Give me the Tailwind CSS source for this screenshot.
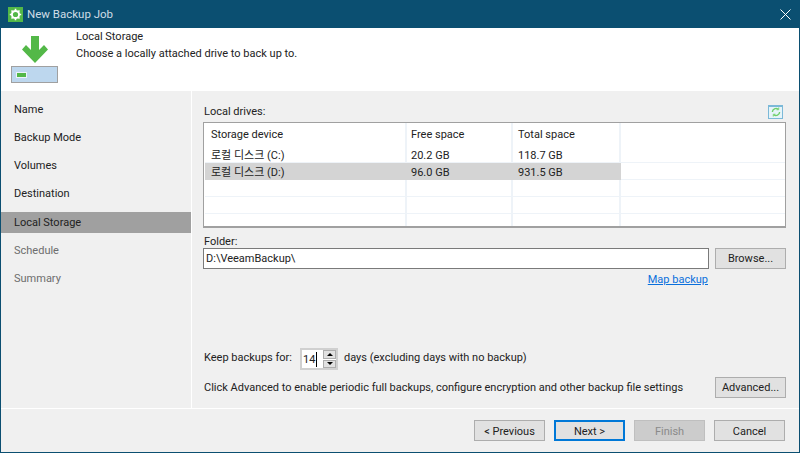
<!DOCTYPE html>
<html lang="en">
<head>
  <meta charset="UTF-8">
  <title>New Backup Job</title>
  <script src="https://cdn.jsdelivr.net/npm/@tailwindcss/browser@4"></script>
</head>
<body class="m-0 overflow-hidden bg-[#f0f0f0]">
  <div class="w-[800px] h-[453px] flex flex-col border-x border-b border-[#0b4f71] text-[11px] leading-[15px] text-[#222] font-['Roboto','Noto_Sans_CJK_KR',sans-serif]">
    <!-- title bar -->
    <div class="h-[28px] -mx-px shrink-0 bg-[#0b4f71] flex items-center pl-2 pr-[9px]">
      <div class="w-[15px] h-[15px] bg-[#53b848] flex items-center justify-center">
        <svg width="13" height="13" viewBox="0 0 13 13"><circle cx="6.5" cy="6.5" r="3.6" fill="none" stroke="#fff" stroke-width="2"/><path d="M6.5 .8v2M6.5 10.2v2M.8 6.5h2M10.2 6.5h2M2.5 2.5l1.4 1.4M9.1 9.1l1.4 1.4M2.5 10.5l1.4-1.4M9.1 3.9l1.4-1.4" stroke="#fff" stroke-width="1.6"/></svg>
      </div>
      <span class="ml-[4px] text-[#cfdde6] text-[11.5px]">New Backup Job</span>
      <svg class="ml-auto" width="11" height="11" viewBox="0 0 11 11"><path d="M.5.5l10 10M10.5.5l-10 10" stroke="#fff" stroke-width="1"/></svg>
    </div>
    <!-- header -->
    <div class="h-[63px] shrink-0 bg-white flex">
      <div class="w-[75px] shrink-0 pl-[10px] pt-[8px] flex flex-col">
        <svg class="ml-[11px]" width="26" height="27" viewBox="0 0 26 27"><path d="M9 0h8v14l5-5 4 4.500L13 27 0 13.500 4 9l5 5z" fill="#53b848"/></svg>
        <div class="mt-[3px] w-[47px] h-[17px] bg-[#bdd7ee] border border-[#a0a0a0] flex items-center pl-[5px]">
          <div class="w-[9px] h-[4px] bg-[#53b848] outline outline-white/70"></div>
        </div>
      </div>
      <div class="pt-[1px]">
        <div class="leading-[15px]">Local Storage</div>
        <div class="mt-[2px]">Choose a locally attached drive to back up to.</div>
      </div>
    </div>
    <!-- main -->
    <div class="h-[318px] shrink-0 flex border-b border-white">
      <div class="w-[190px] shrink-0 pt-[4px]">
        <div class="h-[28.25px] pl-[13px] flex items-center">Name</div>
        <div class="h-[28.25px] pl-[13px] flex items-center">Backup Mode</div>
        <div class="h-[28.25px] pl-[13px] flex items-center">Volumes</div>
        <div class="h-[28.25px] pl-[13px] flex items-center">Destination</div>
        <div class="h-[21px] my-[3.625px] pl-[13px] flex items-center bg-[#a0a0a0]">Local Storage</div>
        <div class="h-[28.25px] pl-[13px] flex items-center text-[#6d6d6d]">Schedule</div>
        <div class="h-[28.25px] pl-[13px] flex items-center text-[#6d6d6d]">Summary</div>
      </div>
      <div class="flex-1 border-l border-white pl-[12px] pr-[13px] pt-[13px] flex flex-col">
        <div class="flex justify-between items-center h-[15px]">
          <span>Local drives:</span>
          <div class="w-[15px] h-[14px] border border-[#7cb9d8] border-t-2 bg-[#e6f4f9] flex items-center justify-center translate-x-[-3px]">
            <svg width="10" height="10" viewBox="0 0 11 11" fill="none" stroke="#6fcf6a" stroke-width="1.500"><path d="M1.500 5.500A4 4 0 0 1 8 2.500M9.500 5.500A4 4 0 0 1 3 8.500"/><path d="M8.500 .5v2.500H6M2.500 10.500V8H5" stroke-width="1"/></svg>
          </div>
        </div>
        <!-- table -->
        <div class="mt-[3px] h-[106px] -ml-px w-[583px] bg-white border border-[#a0a0a0] border-b-2 grid grid-cols-[202px_106px_108px_1fr] grid-rows-[23px_17px_17px_17px_17px_1fr] pl-[1px]">
          <div class="pl-[6px] pt-[4px] border-r-2 border-[#eef3f8]">Storage device</div>
          <div class="pl-[4px] pt-[4px] border-r-2 border-[#eef3f8]">Free space</div>
          <div class="pl-[5px] pt-[4px] border-r-2 border-[#eef3f8]">Total space</div>
          <div></div>

          <div class="pl-[6px] pt-[2px] border-r-2 border-b border-[#eef3f8] flex items-center">로컬 디스크 (C:)</div>
          <div class="pl-[4px] pt-[2px] border-r-2 border-b border-[#eef3f8] flex items-center">20.2 GB</div>
          <div class="pl-[5px] pt-[2px] border-r-2 border-b border-[#eef3f8] flex items-center">118.7 GB</div>
          <div class="border-b border-[#eef3f8]"></div>

          <div class="pl-[6px] pt-[2px] bg-[#d4d4d4] flex items-center">로컬 디스크 (D:)</div>
          <div class="pl-[4px] pt-[2px] bg-[#d4d4d4] flex items-center">96.0 GB</div>
          <div class="pl-[5px] pt-[2px] bg-[#d4d4d4] flex items-center">931.5 GB</div>
          <div class="border-b border-[#eef3f8]"></div>

          <div class="border-r-2 border-b border-[#eef3f8]"></div>
          <div class="border-r-2 border-b border-[#eef3f8]"></div>
          <div class="border-r-2 border-b border-[#eef3f8]"></div>
          <div class="border-b border-[#eef3f8]"></div>

          <div class="border-r-2 border-b border-[#eef3f8]"></div>
          <div class="border-r-2 border-b border-[#eef3f8]"></div>
          <div class="border-r-2 border-b border-[#eef3f8]"></div>
          <div class="border-b border-[#eef3f8]"></div>

          <div class="border-r-2 border-[#eef3f8]"></div>
          <div class="border-r-2 border-[#eef3f8]"></div>
          <div class="border-r-2 border-[#eef3f8]"></div>
          <div></div>
        </div>
        <div class="mt-[6px] h-[14px]">Folder:</div>
        <div class="flex -ml-px">
          <div class="w-[506px] h-[21px] bg-white border border-[#7a7a7a] pl-[2px] flex items-center">D:\VeeamBackup\</div>
          <div class="ml-[6px] w-[71px] h-[21px] bg-[#e1e1e1] border border-[#adadad] flex items-center justify-center">Browse...</div>
        </div>
        <div class="mt-[3px] w-[505px] -ml-px text-right text-[#0a6fdc] underline">Map backup</div>
        <div class="mt-[61px] flex items-center h-[22px]">
          <span class="w-[96px] pb-[3px]">Keep backups for:</span>
          <div class="w-[38px] h-[22px] bg-white border-2 border-[#d0d0d0] flex items-center pl-[1px]">
            <span class="border-r border-black leading-[15px] pr-[0.5px]">14</span>
            <div class="ml-auto w-[13px] h-[18px] flex flex-col gap-px">
              <div class="flex-1 bg-[#e1e1e1] border border-[#adadad] flex items-center justify-center"><div class="border-x-[3px] border-x-transparent border-b-[3px] border-b-black"></div></div>
              <div class="flex-1 bg-[#e1e1e1] border border-[#adadad] flex items-center justify-center"><div class="border-x-[3px] border-x-transparent border-t-[3px] border-t-black"></div></div>
            </div>
          </div>
          <span class="ml-[6px] pb-[3px]">days (excluding days with no backup)</span>
        </div>
        <div class="mt-[7px] flex items-center justify-between h-[21px]">
          <span>Click Advanced to enable periodic full backups, configure encryption and other backup file settings</span>
          <div class="w-[71px] h-[21px] bg-[#e1e1e1] border border-[#adadad] flex items-center justify-center">Advanced...</div>
        </div>
      </div>
    </div>
    <!-- footer -->
    <div class="flex-1 flex justify-end items-start gap-[9px] pt-[11px] pr-[14px]">
      <div class="w-[71px] h-[21px] pt-px bg-[#e1e1e1] border border-[#adadad] flex items-center justify-center">&lt; Previous</div>
      <div class="w-[71px] h-[21px] pt-px bg-[#e1e1e1] border-2 border-[#0078d7] flex items-center justify-center">Next &gt;</div>
      <div class="w-[71px] h-[21px] pt-px bg-[#cccccc] border border-[#bfbfbf] flex items-center justify-center text-[#8a8a8a]">Finish</div>
      <div class="w-[71px] h-[21px] pt-px bg-[#e1e1e1] border border-[#adadad] flex items-center justify-center">Cancel</div>
    </div>
  </div>
</body>
</html>
